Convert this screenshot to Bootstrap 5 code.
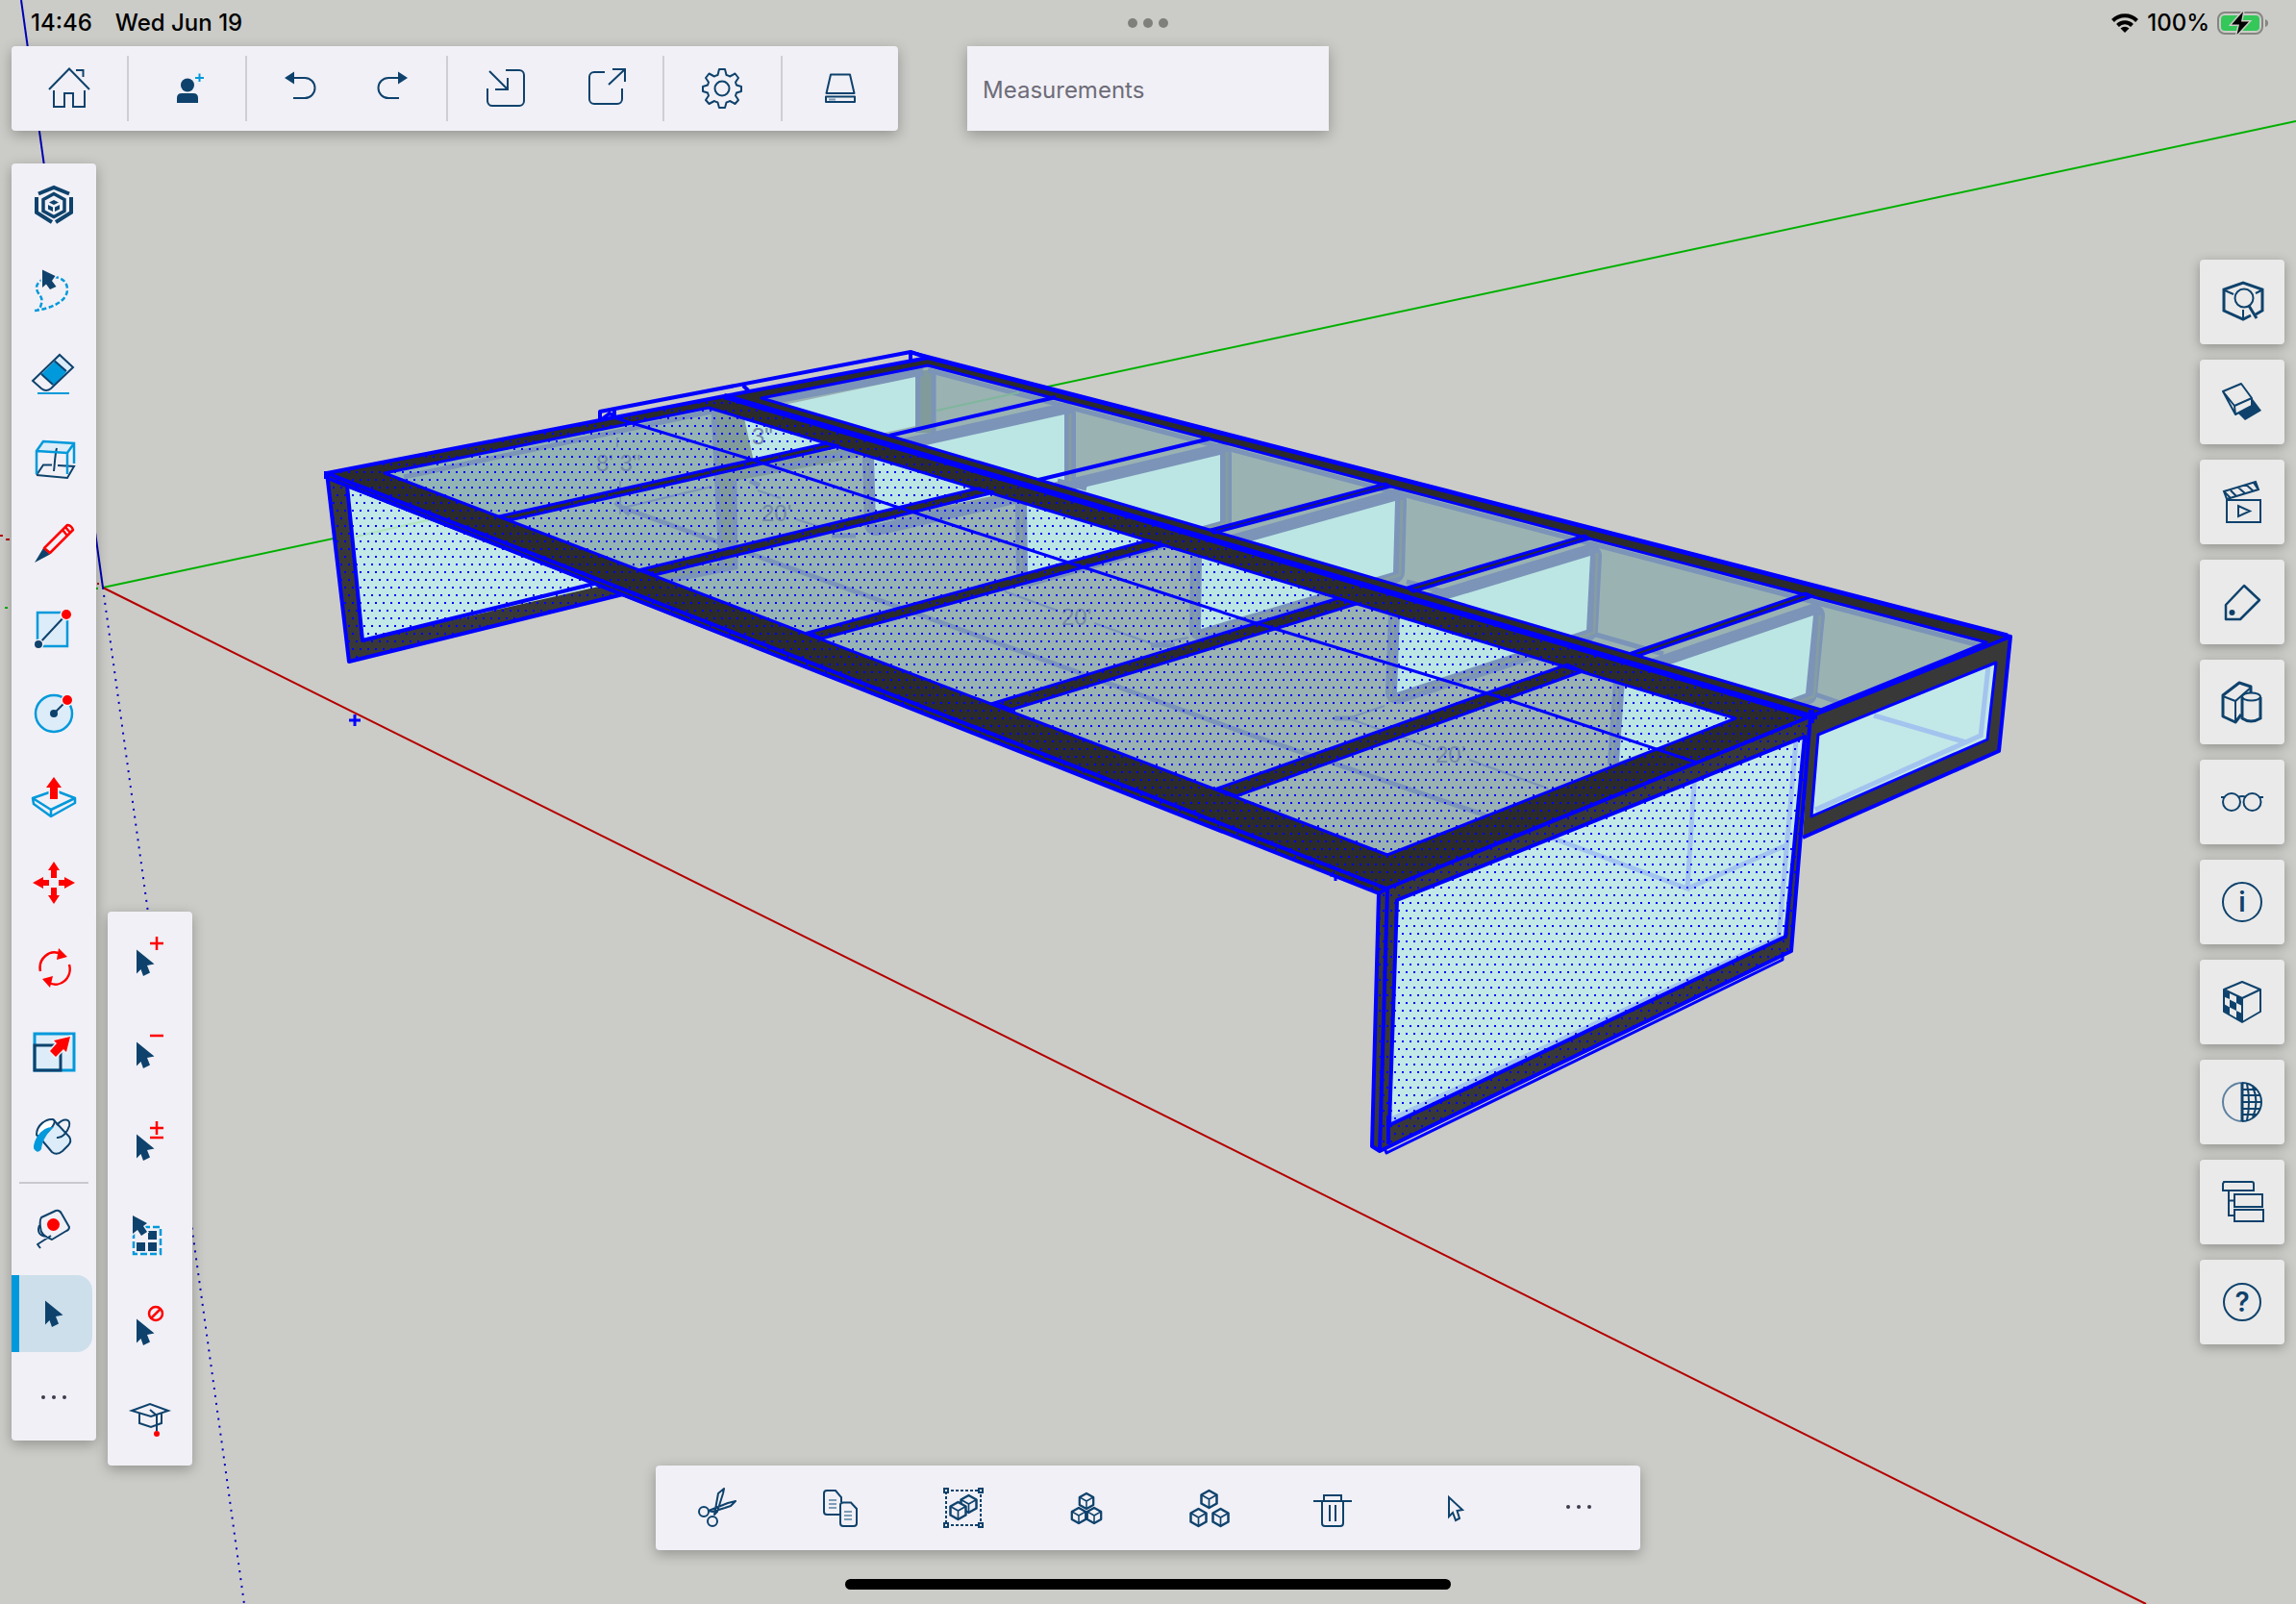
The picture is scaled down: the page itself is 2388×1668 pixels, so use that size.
<!DOCTYPE html>
<html lang="en">
<head>
<meta charset="utf-8">
<meta name="viewport" content="width=device-width, initial-scale=1">
<title>3D model editor</title>
<link href="https://cdn.jsdelivr.net/npm/bootstrap@5.3.0/dist/css/bootstrap.min.css" rel="stylesheet">
<style>
:root{--navy:#0e426c;--cyan:#0099db;--panel:#f1f0f6}
body{background:#cbccc7;font-family:Inter,"Liberation Sans",sans-serif;font-size:24px;color:#000;min-height:100vh;overflow:hidden}
.scene{position:absolute;inset:0;width:100%;height:100%}
.layer{position:relative;min-height:100vh}
.status{height:48px;padding:0 28px 0 32px;line-height:48px;font-weight:500}
.status>div{flex:1 1 0}
.status .pips{gap:6px;padding-right:4px}
.dot{width:10px;height:10px;border-radius:50%;background:#7f807b}
.panel{background:var(--panel);border-radius:4px;box-shadow:0 4px 14px rgba(0,0,0,.28)}
.toprow{padding-left:12px;gap:72px}
.workrow{padding:0 12px}
.topbar{width:922px;height:88px}
.topbar .seg{height:68px;flex:122 1 0;justify-content:center}
.topbar .seg.wide{flex-grow:210}
.topbar .seg.wider{flex-grow:226}
.topbar .wide .tool{flex:0 0 96px}
.topbar .wider .tool{flex:0 0 106px}
.topbar .seg+.seg{border-left:2px solid #cfced4}
.tool{border:0;background:none;padding:0;display:flex;align-items:center;justify-content:center;flex:1 1 auto;min-width:0;color:var(--navy)}
.tool svg{width:48px;height:48px;flex:none;overflow:visible}
.measure{width:376px;height:88px;border:0;border-radius:0;padding:2px 16px 0;font-size:24px;color:#333}
.measure::placeholder{color:#6d6c78;opacity:1}
.rail{width:88px;margin-top:34px}
.rail .tool{height:88px;flex:none}
.rail hr{margin:3px 8px;height:2px;border:0;background:#c9c8ce;opacity:1}
.rail .picked{position:relative}
.rail .picked::before{content:"";position:absolute;inset:4px 4px 4px 0;background:#cddfeb;border-left:8px solid var(--cyan);border-radius:0 16px 16px 0}
.rail .picked svg{position:relative}
.flyout{width:88px;margin:0 0 144px 12px}
.flyout .tool{height:96px;flex:none}
.side{gap:16px;margin-top:134px}
.side .tool{width:88px;height:88px;flex:none;background:#eaeaea;border-radius:4px;box-shadow:0 3px 12px rgba(0,0,0,.3)}
.foot{padding-bottom:15px;gap:30px}
.bottombar{width:1024px;height:88px}
.homebar{width:630px;height:11px;border-radius:6px;background:#000}
.ln{fill:none;stroke:var(--navy);stroke-width:2}
.l3{fill:none;stroke:var(--navy);stroke-width:3}
.rd{fill:none;stroke:red;stroke-width:2.5}
.fn{fill:var(--navy)}
.fr{fill:red}
.halo{stroke:#f1f0f6;stroke-width:3;paint-order:stroke}
.glyph{font:600 28px Inter,"Liberation Sans",sans-serif;fill:var(--navy);text-anchor:middle}
.edge{fill:none;stroke:#00f;stroke-width:4;stroke-linejoin:round}
.thin{stroke-width:3}
.thick{stroke-width:6}
.bars{fill:#2b2b2b;stroke:#00f;stroke-width:3}
.win{fill:#bce6e4;stroke:#7b94b8;stroke-width:24;paint-order:stroke;stroke-linejoin:round}
.rim{fill:none;stroke:#869da1;stroke-width:3}
.ghost{fill:none;stroke:#7b94b8;stroke-width:5}
.ghost.fine{stroke-width:2}
.pale{fill:none;stroke:#a3c4ee;stroke-width:5}
.dim{font:24px "Liberation Sans",sans-serif;fill:#7388a8}
</style>
<script src="https://cdn.jsdelivr.net/npm/bootstrap@5.3.0/dist/js/bootstrap.bundle.min.js"></script>
</head>
<body>
<!-- shared symbols -->
<svg class="d-none" aria-hidden="true">
  <symbol id="cursor" viewBox="0 0 48 48" overflow="visible"><path class="fn" d="M15 10.500V35.500L19.500 31 22 38 29 34.500 26 27 33.500 25.500Z"/></symbol>
  <symbol id="cube" viewBox="0 0 18 20" overflow="visible"><path fill="none" stroke="#0e426c" stroke-width="2.500" stroke-linejoin="round" d="M9 1L17 5.500V14.500L9 19 1 14.500V5.500Z"/><path fill="none" stroke="#0e426c" stroke-width="1.700" d="M1 5.500L9 10 17 5.500M9 10V19"/></symbol>
</svg>

<!-- modelling canvas -->
<svg class="scene" viewBox="0 0 2388 1668" preserveAspectRatio="xMidYMid slice" role="img" aria-label="Glass frame model on the drawing axes">
  <defs>
    <pattern id="dots" width="8" height="16" patternUnits="userSpaceOnUse"><rect x="2" y="10" width="2" height="2" fill="#00f"/><rect x="6" y="2" width="2" height="2" fill="#00f"/></pattern>
    <linearGradient id="roof" x1="0" x2="1"><stop offset="0" stop-color="#92b5b5"/><stop offset=".5" stop-color="#9ab2b2"/></linearGradient>
    <clipPath id="inBoth"><path d="M400 492L737 424 1805 747 1443 889Z"/><path d="M792 414L965 380 2066 668 1894 738Z"/></clipPath>
    <clipPath id="inFront"><path d="M1453 936L1877 766 1857 974 1445 1170Z"/></clipPath>
  </defs>
  <!-- axes -->
  <path d="M107 611L2388 126" stroke="#00b000" stroke-width="2"/>
  <path d="M107 611L2232 1668" stroke="#b40000" stroke-width="2"/>
  <path d="M22 0L107 611" stroke="#0000b4" stroke-width="2"/>
  <path d="M107 611L254 1668" stroke="#0000c0" stroke-width="2" stroke-dasharray="2 6"/>
  <path d="M0 557h3M6 561h4M101 607h2" stroke="#b40000" stroke-width="2"/><path d="M5 632h3M99 612h3" stroke="#00b000" stroke-width="2"/>
  <path class="edge thin" d="M363 749h12M369 743v12M1383 910h12M1389 904v12"/>

  <!-- rear rail -->
  <path class="edge" d="M624 440V428L947 366 965 372M626 436L634 430 641 434M639 440V425M773 401L778 406V410M947 366V376"/>

  <!-- left end -->
  <path fill="#383838" d="M340 492L363 688 648 618 420 500Z"/>
  <path fill="#c3e8e8" d="M361 505L377 666 640 606 420 505Z"/>
  <path d="M370 558L480 533" stroke="#aee4bc" stroke-width="2"/>
  <path class="edge" d="M340 492L363 688 648 618M361 505L377 666 626 605"/>

  <!-- right end -->
  <path fill="#383838" d="M1883 745L2091 662 2079 781 1875 871Z"/>
  <path fill="#c3e8e8" d="M1891 764L2076 689 2067 769 1884 849Z"/>
  <path class="pale" d="M2068 693L2060 766M2045 772L1949 744M2062 764L1888 842"/>
  <path class="edge thin" d="M1891 764L2076 689 2067 769 1884 849Z"/>
  <path class="edge" d="M2091 662L2079 781 1875 871"/>

  <!-- front end -->
  <path fill="#383838" d="M1434 928L1883 745 1863 989 1435 1196 1427 1192Z"/>
  <path fill="#c3e8e8" d="M1453 936L1877 766 1857 974 1445 1170Z"/>
  <g clip-path="url(#inFront)"><path class="pale" d="M1868 770L1850 975 1445 1165M1600 866L1755 924 1763 800M1755 924L1860 878"/></g>
  <path class="edge" d="M1453 936L1877 766 1857 974 1445 1170Z"/>
  <path class="edge" d="M1434 928L1427 1192 1435 1197 1443 925M1435 1197L1863 989 1883 745M1444 1160V1190"/>
  <path class="edge thin" d="M1440 1194L1442 1199 1854 998V990"/>

  <!-- dark frame top -->
  <path fill="#2b2b2b" d="M340 492L753 412 965 372 2091 662 1883 745 1442 924 1434 930 343 500Z"/>
  <path fill="url(#roof)" d="M400 492L737 424 1805 747 1443 889Z"/>
  <path fill="#9ab2b2" d="M792 414L965 380 2066 668 1894 738Z"/>

  <!-- inner panes seen through the glass -->
  <g clip-path="url(#inBoth)">
    <path fill="#819b9b" d="M740 425H784L784 478 895 465V475L765 500 765 590 690 607 680 598 748 585Z"/>
    <path fill="#819b9b" d="M952 385H972V450H952Z"/>
    <path class="ghost" d="M420 496L740 428M742 425L750 590M764 500L765 590 690 605M780 493L895 468"/>
    <path class="ghost" d="M955 390V450M971 385V450M965 385L2066 673"/>
    <path stroke="#7b94b8" stroke-width="10" d="M800 416L960 386"/>
    <path fill="#bce6e4" d="M773 430L952 392V443L784 480Z"/>
    <path d="M974 427L1060 408" stroke="#7fb69c" stroke-width="2"/>
    <path class="win" d="M909 475L1107 431V500L911 545Z"/>
    <path class="win" d="M1068 521L1269 473V542L1069 598Z"/>
    <path class="win" d="M1250 577L1451 521 1449 595 1249 654Z"/>
    <path class="win" d="M1456 638L1654 578 1650 655 1453 720Z"/>
    <path class="win" d="M1690 707L1886 640 1878 721 1684 792Z"/>
    <path class="rim" d="M902 480V545L1113 500V430M1062 525V603L1276 544V470M1243 585V661L1456 598 1458 520M1449 645L1446 728 1658 658 1661 575M1682 715L1676 800 1887 724 1893 640"/>
    <path class="ghost" d="M648 528L1000 655 1300 764 1560 853M1100 500L1130 508M1281 560L1320 570M1463 605L1500 615M1660 660L1730 680M1888 722L1940 740"/>
    <path class="ghost fine" d="M648 528L740 506M642 455V465M645 500V535M812 518L788 510M828 540L860 550M1045 615L1100 635M1138 648L1200 670 1236 663M1440 734L1402 747 1488 777M1528 790L1610 820M1700 800L1640 820"/>
    <path class="ghost" d="M640 522L655 535M780 500L790 505M865 557H890M1197 671H1222M1388 747H1410"/>
    <text class="dim" x="620" y="490">8' 3"</text><text class="dim" x="782" y="462">3"</text>
    <text class="dim" x="792" y="542">20'</text><text class="dim" x="1104" y="650">20'</text><text class="dim" x="1493" y="793">20'</text>
  </g>

  <!-- cross bars, main bay -->
  <g class="bars">
    <path d="M519 537L860 461 873 464 530 541Z"/>
    <path d="M668 592L1016 508 1034 512 681 598Z"/>
    <path d="M840 658L1194 562 1211 567 855 664Z"/>
    <path d="M1034 731L1392 622 1411 628 1052 738Z"/>
    <path d="M1266 820L1630 691 1646 698 1286 828Z"/>
  </g>
  <!-- cross bars, rear bay -->
  <path class="edge" d="M925 453L1098 413M1080 499L1259 456"/>
  <g class="bars">
    <path d="M1259 551L1441 503 1446 506 1263 554Z"/>
    <path d="M1464 611L1648 557 1653 560 1470 615Z"/>
    <path d="M1697 679L1878 617 1885 620 1704 682Z"/>
  </g>

  <!-- frame edges -->
  <path class="edge" d="M343 498L1434 929 1442 924 340 492 753 412 965 372 2091 662 1883 745 1442 924"/>
  <path class="edge thin" d="M947 366L2088 660"/>
  <path class="edge thick" d="M753 412L1883 745"/>
  <path class="edge thin" d="M400 492L737 424 1805 747 1443 889Z"/>
  <path class="edge thin" d="M792 414L965 380 2066 668 1894 738Z"/>
  <path class="edge thin" d="M641 435L782 478 1000 549 1300 646 1560 725 1765 793"/>
  <path class="edge thick" d="M1878 745H1890M1884 738V752M340 490V498"/>

  <!-- selection dots -->
  <path fill="url(#dots)" d="M340 492L753 412 1883 745 1863 989 1435 1196 1434 929 648 618 363 688Z"/>
</svg>

<div class="layer d-flex flex-column">
  <header class="status d-flex align-items-center">
    <div class="d-flex"><span>14:46</span><span class="ms-4">Wed Jun 19</span></div>
    <div class="pips d-flex justify-content-center" aria-hidden="true"><span class="dot"></span><span class="dot"></span><span class="dot"></span></div>
    <div class="d-flex justify-content-end align-items-center gap-2">
      <svg width="30" height="22" viewBox="0 0 30 22" role="img" aria-label="Wi-Fi"><g fill="none" stroke="#000" stroke-width="4"><path d="M2.500 8.500A17.500 17.500 0 0 1 27.500 8.500"/><path d="M7.500 13.500A10.500 10.500 0 0 1 22.500 13.500"/></g><path d="M15 21L10.500 16.500A6.500 6.500 0 0 1 19.500 16.500Z"/></svg>
      <span>100%</span>
      <svg width="54" height="26" viewBox="0 0 54 26" role="img" aria-label="Battery charging"><rect x="1" y="2" width="46" height="22" rx="7" fill="none" stroke="#858681" stroke-width="2"/><rect x="4" y="5" width="40" height="16" rx="4" fill="#34c759"/><path d="M50 9v8q3-1 3-4t-3-4" fill="#858681"/><path d="M27 1L15 14.500H23L20.500 25 33 11.500H25Z" stroke="#cbccc7" stroke-width="3" paint-order="stroke"/></svg>
    </div>
  </header>

  <div class="toprow d-flex">
    <nav class="panel topbar d-flex align-items-center" aria-label="Main">
      <div class="seg d-flex"><button class="tool" aria-label="Home"><svg viewBox="0 0 48 48"><path class="ln" d="M3 25L24 3.500 45 25M31 5H38.500V12M8 26V43H19V29H28V43H40V26"/></svg></button></div>
      <div class="seg d-flex"><button class="tool" aria-label="Add collaborator"><svg viewBox="0 0 48 48"><circle class="fn" cx="24" cy="20.500" r="7"/><path class="fn" d="M13 39V34Q13 29 18 29H30Q35 29 35 34V39Z"/><path d="M36.500 8.500V17M32 13H41" stroke="#0099db" stroke-width="2"/></svg></button></div>
      <div class="seg wide d-flex">
        <button class="tool" aria-label="Undo"><svg viewBox="0 0 48 48"><path class="fn" d="M8 13L18 6.500V19.500Z"/><path class="ln" d="M16 13H29A10.500 10.500 0 0 1 29 34H17"/></svg></button>
        <button class="tool" aria-label="Redo"><svg viewBox="0 0 48 48"><path class="fn" d="M40 13L30 6.500V19.500Z"/><path class="ln" d="M32 13H20A10.500 10.500 0 0 0 20 34H31"/></svg></button>
      </div>
      <div class="seg wider d-flex">
        <button class="tool" aria-label="Import"><svg viewBox="0 0 48 48"><path class="ln" d="M25 5H39A5 5 0 0 1 44 10V37A5 5 0 0 1 39 42H11A5 5 0 0 1 6 37V24M8 6L27 25M27 13V25H14"/></svg></button>
        <button class="tool" aria-label="Export"><svg viewBox="0 0 48 48"><path class="ln" d="M22 7H11A5 5 0 0 0 6 12V35A5 5 0 0 0 11 40H35A5 5 0 0 0 40 35V24M26 20L43 4M30 4H43V17"/></svg></button>
      </div>
      <div class="seg d-flex"><button class="tool" aria-label="Settings"><svg viewBox="0 0 48 48"><circle class="ln" cx="24" cy="24" r="7.500"/><path class="ln" stroke-linejoin="round" d="M21 4H27L28.500 10Q30.500 10.500 32 11.500L37.500 8.500 41 13 38 17.500Q38.500 19 39 20.500L44 22V27L39 28.500Q38.500 30 38 31.500L41 36 37.500 40 32 37Q30.500 38 28.500 38.500L27 44H21L19.500 38.500Q17.500 38 16 37L10.500 40 7 36 10 31.500Q9.500 30 9 28.500L4 27V22L9 20.500Q9.500 19 10 17.500L7 13 10.500 8.500 16 11.500Q17.500 10.500 19.500 10Z"/></svg></button></div>
      <div class="seg d-flex"><button class="tool" aria-label="Storage"><svg viewBox="0 0 48 48"><path class="ln" stroke-linejoin="round" d="M14 9.500H34L38.500 29H9.500ZM9 32.500H39V38H9Z"/><path d="M12 35.500H19" stroke="#7f9cb5" stroke-width="2"/></svg></button></div>
    </nav>
    <input class="panel measure" type="text" placeholder="Measurements" aria-label="Measurements">
  </div>

  <div class="workrow d-flex justify-content-between flex-grow-1">
    <div class="d-flex">
      <nav class="panel rail d-flex flex-column align-self-start" aria-label="Drawing tools">
        <button class="tool" aria-label="Components"><svg viewBox="0 0 48 48"><g fill="none" stroke="#0e426c"><path stroke-width="4" d="M8 11.500L24 5 40 11.500M6 15V31L22 41M42 15V31L26 41"/><path stroke-width="3.500" d="M24 11.500L35 17.500V29.500L24 35.500 13 29.500V17.500Z"/></g><path class="fn" d="M19 20.500L24 18 29 20.500 24 23ZM18 23L23 25.500V30L18 27.500ZM30 23L25 25.500V30L30 27.500Z"/></svg></button>
        <button class="tool" aria-label="Lasso"><svg viewBox="0 0 48 48"><path fill="none" stroke="#0099db" stroke-width="2.500" stroke-dasharray="5 2.500" d="M4 45C20 43 38 36 38 23C38 15 32 10 23 10C10 11 4 18 6.500 24C8 29 13 30 11 38C10 42 9 43 6 45"/><path class="fn halo" d="M12 2.500V21L16 17.500 20 23 26.500 20 22 14 25.500 9Z"/></svg></button>
        <button class="tool" aria-label="Eraser"><svg viewBox="0 0 48 48"><path fill="#dcecf8" d="M25 9.500L30 3 44 16 37 22Z"/><path fill="#0099db" d="M11 23L25 9.500 37 21 24 35Z"/><path class="ln" d="M2 30L30 3 44 16 21 38Q16 42 11 38ZM11 23L23 34M25 9.500L37 20"/><path d="M7 43H40" stroke="#0099db" stroke-width="2"/></svg></button>
        <button class="tool" aria-label="Section box"><svg viewBox="0 0 48 48"><path fill="#dcecf8" d="M13 5L45 7 38 17 6 15Z"/><path class="ln" d="M6 40L38 43 45 31 28 30M22 29.500H13L6 40M27 12C25 20 25 28 24 36"/><path fill="none" stroke="#0099db" stroke-width="2.500" d="M6 39V15L13 5 45 7V28M6 15L38 17 45 7M38 17V39"/></svg></button>
        <button class="tool" aria-label="Pencil"><svg viewBox="0 0 48 48"><path class="fn" d="M4 43L13 28 20 34.500Z"/><path class="rd" stroke-linejoin="round" d="M14 28L38 4Q42 4 44 9L20 33ZM33 9L38 15M36 6L41 12"/></svg></button>
        <button class="tool" aria-label="Rectangle"><svg viewBox="0 0 48 48"><rect x="7" y="7" width="31" height="35" fill="#dcecf8" stroke="#0099db" stroke-width="2.500"/><path class="ln" d="M8 40L37 9"/><circle class="fr halo" cx="37" cy="9" r="5"/><circle class="fn halo" cx="8" cy="40" r="4"/></svg></button>
        <button class="tool" aria-label="Circle"><svg viewBox="0 0 48 48"><circle cx="24" cy="24" r="19" fill="#dcecf8" stroke="#0099db" stroke-width="2.500"/><path class="ln" d="M24 24L36 12"/><circle class="fr halo" cx="38" cy="10" r="5"/><circle class="fn" cx="24" cy="24" r="4"/></svg></button>
        <button class="tool" aria-label="Push pull"><svg viewBox="0 0 48 48"><path fill="none" stroke="#0099db" stroke-width="2.500" stroke-linejoin="round" d="M2 24L25 16 46 24V29L21 43 3 30ZM2 24L21 36 46 24M21 36V43"/><path class="fr halo" d="M24 2L32 13H28V25H20V13H16Z"/></svg></button>
        <button class="tool" aria-label="Move"><svg viewBox="0 0 48 48"><path class="fr" d="M24 2L30 11H27V19H21V11H18ZM24 46L30 37H27V29H21V37H18ZM2 24L13 18V21H19V27H13V30ZM46 24L35 18V21H29V27H35V30Z"/></svg></button>
        <button class="tool" aria-label="Rotate"><svg viewBox="0 0 48 48"><path class="rd" d="M10 28A15 16 0 0 1 31 10M40 21A15 16 0 0 1 19 40"/><path class="fr" d="M29 4L38 13 27 16ZM20 45L12 36 23 33Z"/></svg></button>
        <button class="tool" aria-label="Scale"><svg viewBox="0 0 48 48"><rect x="4" y="5" width="41" height="38" fill="#dcecf8" stroke="#0099db" stroke-width="3"/><path class="l3" d="M4 17H31V43H4Z"/><path class="fr halo" d="M41 8L37 24 34 21 26 29 20 23 27 15 24 12Z"/></svg></button>
        <button class="tool" aria-label="Paint bucket"><svg viewBox="0 0 48 48"><path fill="#dcecf8" stroke="#0e426c" stroke-width="2" d="M11 27L22 40Q27 44 33 39L39 33Q43 29 40 24L24 7 9 20Z"/><path fill="#fff" stroke="#0e426c" stroke-width="2" d="M6 22C6 12 16 5 23 6C28 8 22 16 10 26Z"/><path fill="#0099db" d="M3 36C3 26 12 13 24 14C17 20 12 28 11 37Q7 43 3 36Z"/><path class="ln" d="M27 12C34 4 42 5 40 13C38 20 32 26 27 25"/></svg></button>
        <hr>
        <button class="tool" aria-label="Tape measure"><svg viewBox="0 0 48 48"><path class="ln" stroke-linejoin="round" d="M11 12L26 5Q30 4 32 8L40 22Q40 25 37 26L22 35Q10 31 10 22Q9 15 11 12ZM21 31L7 40 10 44M9 20Q5 31 17 32"/><circle class="fr" cx="23.500" cy="19.500" r="6.500"/></svg></button>
        <button class="tool picked" aria-label="Select" aria-pressed="true"><svg viewBox="0 0 48 48"><use href="#cursor"/></svg></button>
        <button class="tool" aria-label="More tools"><svg viewBox="0 0 48 48" fill="#3d3c4c"><circle cx="13" cy="23" r="2"/><circle cx="24" cy="23" r="2"/><circle cx="35" cy="23" r="2"/></svg></button>
      </nav>
      <nav class="panel flyout d-flex flex-column align-self-end" aria-label="Select options">
        <button class="tool" aria-label="Add to selection"><svg viewBox="0 0 48 48"><use href="#cursor" x="-5" y="5"/><path class="rd" d="M24 9H38M31 2V16"/></svg></button>
        <button class="tool" aria-label="Remove from selection"><svg viewBox="0 0 48 48"><use href="#cursor" x="-5" y="5"/><path class="rd" d="M24 9H38"/></svg></button>
        <button class="tool" aria-label="Toggle selection"><svg viewBox="0 0 48 48"><use href="#cursor" x="-5" y="5"/><path class="rd" d="M24 9H38M31 2V16M24 19H38"/></svg></button>
        <button class="tool" aria-label="Select group"><svg viewBox="0 0 48 48"><rect x="7" y="16" width="28" height="28" fill="none" stroke="#0099db" stroke-width="2.500" stroke-dasharray="7 3"/><path class="fn" d="M22 20H31V29H22ZM10 32H19V41H10ZM22 32H31V41H22Z"/><path class="fn halo" d="M6 4V23L11 19 15 25 21 21 17 15 21 12Z"/></svg></button>
        <button class="tool" aria-label="Clear selection"><svg viewBox="0 0 48 48"><use href="#cursor" x="-5" y="5"/><circle class="rd" cx="30" cy="10" r="7"/><path class="rd" d="M25 15L35 5"/></svg></button>
        <button class="tool" aria-label="Learn"><svg viewBox="0 0 48 48"><path class="ln" d="M5 15L24 8 43 15 25 21ZM13 18V28L25 32 36 28V18"/><path class="ln" d="M24 14L31 20V36"/><circle class="fr" cx="31" cy="39" r="3"/></svg></button>
      </nav>
    </div>

    <nav class="side d-flex flex-column align-self-start" aria-label="Panels">
      <button class="tool" aria-label="Search"><svg viewBox="0 0 48 48"><path class="l3" d="M38 37L45 33V11L25 4 5 11V33L25 42 33 38"/><path class="ln" d="M6 12L15 16M38 15L44 12M25 32V42"/><circle class="ln" cx="26" cy="20" r="9.500"/><path class="l3" d="M31 28L39 41"/></svg></button>
      <button class="tool" aria-label="Shadows"><svg viewBox="0 0 48 48"><path class="fn" d="M35 21L44 33 27 43 20 36Z"/><path fill="#eaeaea" stroke="#0e426c" stroke-width="2" stroke-linejoin="round" d="M4 13L23 5 34 20V28L17 37ZM4 13L16 28 34 20M16 28L17 37"/></svg></button>
      <button class="tool" aria-label="Scenes"><svg viewBox="0 0 48 48"><path class="ln" d="M8 22H43V45H8ZM20 28V39L32 33.500ZM8 21L5 13 38 3 41 11ZM12 12L18 18M20 9L27 15M28 6L35 12M36 4L40 10M6 14L12 20"/></svg></button>
      <button class="tool" aria-label="Tags"><svg viewBox="0 0 48 48"><path fill="none" stroke="#0e426c" stroke-width="2.500" stroke-linejoin="round" d="M7 27L26 7 42 22 22 42H7Z"/><circle class="fn" cx="13.500" cy="35" r="3"/></svg></button>
      <button class="tool" aria-label="Component library"><svg viewBox="0 0 48 48"><path class="l3" stroke-linejoin="round" d="M23 37L17 45 4 39V17L21 4 33 8V15"/><path class="ln" d="M4 18L17 23 33 9M17 23V44"/><path class="l3" d="M24 19V41Q33 47 43 41V19"/><ellipse class="ln" cx="33.500" cy="18.500" rx="9.500" ry="4"/></svg></button>
      <button class="tool" aria-label="View"><svg viewBox="0 0 48 48"><circle class="ln" cx="13" cy="24" r="9"/><circle class="ln" cx="34.500" cy="24" r="9"/><path class="ln" d="M2 19H6M42 19H46M20 19Q24 17 28 19"/></svg></button>
      <button class="tool" aria-label="Info"><svg viewBox="0 0 48 48"><circle class="ln" cx="24" cy="24" r="20"/><text class="glyph" x="24" y="34">i</text></svg></button>
      <button class="tool" aria-label="Materials"><svg viewBox="0 0 48 48"><path class="ln" stroke-linejoin="round" d="M24 3L43 11V34L24 45 5 34V11ZM5 11L24 20 43 11M24 20V45"/><path class="fn" d="M5 12L11 14.500V21L5 18.500ZM18 17.500L24 20V28L18 25ZM11 21.500L18 25V33L11 29.500ZM5 26L11 29.500V37L5 33.500ZM18 33L24 36V45L18 41.500Z"/></svg></button>
      <button class="tool" aria-label="Styles"><svg viewBox="0 0 48 48"><path fill="none" stroke="#5d80a0" stroke-width="2" d="M24 4A20 20 0 0 0 24 44"/><path class="l3" d="M24 4V44"/><path class="ln" d="M24 4A20 20 0 0 1 24 44M24 11H39M24 17H43M24 24H44M24 31H43M24 37H39M29 5Q33 24 29 43M35 8Q42 24 35 40"/></svg></button>
      <button class="tool" aria-label="Outliner"><svg viewBox="0 0 48 48"><path class="ln" d="M5 3H34Q36 3 36 5V12H4V5ZM10 12V38H16M10 22.500H16M16 16H45V29H16ZM16 32H46V44H16Z"/></svg></button>
      <button class="tool" aria-label="Help"><svg viewBox="0 0 48 48"><circle class="ln" cx="24" cy="24" r="19"/><text class="glyph" x="24" y="34">?</text></svg></button>
    </nav>
  </div>

  <footer class="foot position-absolute bottom-0 start-0 end-0 d-flex flex-column align-items-center">
    <nav class="panel bottombar d-flex" aria-label="Edit">
      <button class="tool" aria-label="Cut"><svg viewBox="0 0 48 48"><path class="ln" stroke-linejoin="round" d="M31 4L25 9 21 31 24 28 30 9ZM43 17L35 19 15 27 19 28 32 24 38 22Z"/><circle class="ln" cx="10" cy="28" r="5"/><circle class="ln" cx="19" cy="38" r="5"/></svg></button>
      <button class="tool" aria-label="Copy"><svg viewBox="0 0 48 48"><path class="ln" d="M24 31H10Q7 31 7 28V9Q7 6 10 6H19L25 13V18M27 18.500H35L41 25V40Q41 43 38 43H27Q24 43 24 40V21Q24 18.500 27 18.500Z"/><path stroke="#7f9cb5" stroke-width="2" d="M12 16H20M12 20H20M12 24H20M28 28H36M28 32H36M28 36H36"/></svg></button>
      <button class="tool" aria-label="Group"><svg viewBox="0 0 48 48"><rect x="6" y="6" width="36" height="36" fill="none" stroke="#0e426c" stroke-width="2" stroke-dasharray="3 2"/><path fill="#f1f0f6" stroke="#0e426c" stroke-width="2" d="M4 4H8V8H4ZM40 4H44V8H40ZM4 40H8V44H4ZM40 40H44V44H40Z"/><use href="#cube" x="20" y="10" width="19" height="20"/><path fill="#f1f0f6" d="M10 22L18 17 27 22V32L18 37 10 32Z"/><use href="#cube" x="9" y="17" width="19" height="20"/></svg></button>
      <button class="tool" aria-label="Make component"><svg viewBox="0 0 48 48"><use href="#cube" x="15" y="8" width="18" height="18"/><use href="#cube" x="7" y="23" width="18" height="18"/><use href="#cube" x="23" y="23" width="18" height="18"/></svg></button>
      <button class="tool" aria-label="Explode"><svg viewBox="0 0 48 48"><use href="#cube" x="14" y="5" width="19" height="20"/><use href="#cube" x="3" y="24" width="19" height="20"/><use href="#cube" x="26" y="24" width="19" height="20"/></svg></button>
      <button class="tool" aria-label="Delete"><svg viewBox="0 0 48 48"><path class="ln" d="M4 17H44M15 16V11H33V16M13 17V40Q13 43 16 43H32Q35 43 35 40V17M21 21V38M27 21V38"/></svg></button>
      <button class="tool" aria-label="Select"><svg viewBox="0 0 48 48"><path class="ln" d="M17 13V33L21 29 24 37 28 35 25.500 27 31 26Z"/></svg></button>
      <button class="tool" aria-label="More"><svg viewBox="0 0 48 48" fill="#3d3c4c"><circle cx="13" cy="23" r="2"/><circle cx="24" cy="23" r="2"/><circle cx="35" cy="23" r="2"/></svg></button>
    </nav>
    <div class="homebar"></div>
  </footer>
</div>
</body>
</html>
